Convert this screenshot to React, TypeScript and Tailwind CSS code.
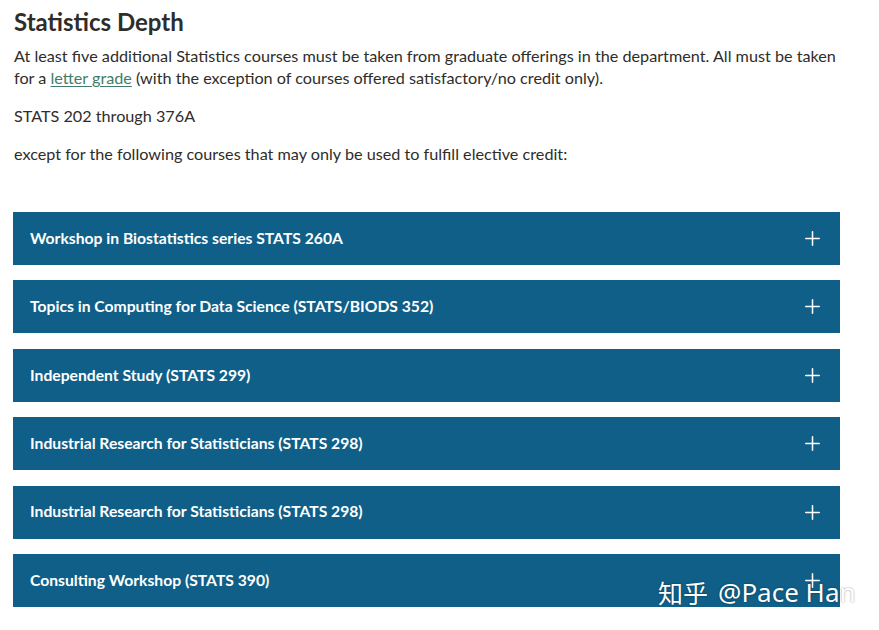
import { Plus } from 'lucide-react'

const courses = [
  'Workshop in Biostatistics series STATS 260A',
  'Topics in Computing for Data Science (STATS/BIODS 352)',
  'Independent Study (STATS 299)',
  'Industrial Research for Statisticians (STATS 298)',
  'Industrial Research for Statisticians (STATS 298)',
  'Consulting Workshop (STATS 390)',
]

export default function App() {
  return (
    <div className="relative h-[630px] w-[879px] overflow-hidden bg-white font-['Lato',sans-serif] text-[#2e2d29]">
      <div className="w-[860px] px-[14px] pt-[6px]">
        <h2 className="text-[24px] font-bold leading-[32px]">Statistics Depth</h2>
        <p className="mt-[7px] text-[16.2px] leading-[22px]">
          At least five additional Statistics courses must be taken from graduate offerings in the department. All must
          be taken for a{' '}
          <a href="#" className="text-[#3f7d69] underline underline-offset-2">
            letter grade
          </a>{' '}
          (with the exception of courses offered satisfactory/no credit only).
        </p>
        <p className="mt-[16px] text-[16.2px] leading-[22px]">STATS 202 through 376A</p>
        <p className="mt-[16px] text-[16.2px] leading-[22px]">
          except for the following courses that may only be used to fulfill elective credit:
        </p>
      </div>

      <div className="mt-[47px] flex w-[827px] flex-col gap-[15.4px] pl-[13px] box-content">
        {courses.map((c, i) => (
          <button
            key={i}
            type="button"
            className="flex h-[53px] w-[827px] items-center justify-between bg-[#0f5f88] pl-[17px] pr-[16px] text-left text-[15.7px] font-bold text-white"
          >
            <span>{c}</span>
            <Plus size={23} strokeWidth={1.6} />
          </button>
        ))}
      </div>

      <div className="absolute left-[658px] top-[576px] flex items-center gap-[10px] leading-[32px] text-white [text-shadow:0_0_2px_rgba(0,0,0,0.45)]">
        <span className="font-['Noto_Sans_CJK_SC',sans-serif] text-[25px]">知乎</span>
        <span className="font-['Noto_Sans',sans-serif] text-[26px]">@Pace Han</span>
      </div>
    </div>
  )
}
